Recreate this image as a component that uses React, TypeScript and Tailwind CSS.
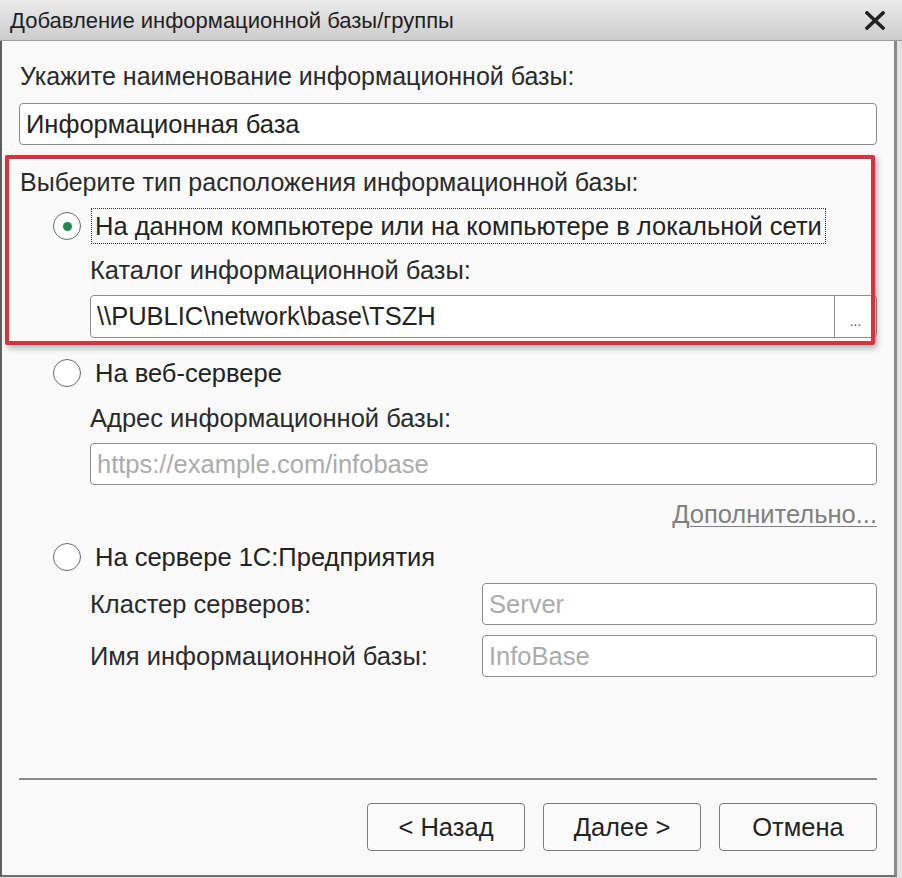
import React from "react";

const font = { fontFamily: '"Liberation Sans", Arial, sans-serif' };

function Radio({ checked, label, focused }: { checked?: boolean; label: string; focused?: boolean }) {
  return (
    <div className="flex items-center h-[38px] ml-[34px]">
      <span className="w-[28px] h-[28px] rounded-full border-[1.5px] border-[#6a6a6a] bg-white flex items-center justify-center shrink-0">
        {checked && <span className="w-[9px] h-[9px] rounded-full bg-[#1e8b4f]" />}
      </span>
      <span
        className={`ml-[10px] px-[3px] h-[36px] flex items-center text-[25.5px] text-[#222] whitespace-nowrap ${
          focused ? "border border-dotted border-[#333]" : "border border-transparent"
        }`}
      >
        {label}
      </span>
    </div>
  );
}

function Field({ value, placeholder, className = "" }: { value?: string; placeholder?: string; className?: string }) {
  return (
    <div
      className={`h-[42px] border border-[#8c8c8c] rounded-[4px] bg-white flex items-center px-[6px] text-[25.5px] ${className}`}
    >
      {value ? <span className="text-[#222]">{value}</span> : <span className="text-[#ababab]">{placeholder}</span>}
    </div>
  );
}

export default function App() {
  return (
    <div className="relative w-[902px] h-[878px] bg-[#e2e2e2] overflow-hidden" style={font}>
      {/* title bar */}
      <div className="h-[41px] bg-gradient-to-b from-[#ebebeb] to-[#cdcdcd] border-b border-[#9c9c9c] flex items-center justify-between pl-[10px] pr-[17px]">
        <span className="text-[22px] text-[#1f1f1f]">Добавление информационной базы/группы</span>
        <svg width="20" height="19" viewBox="0 0 20 19">
          <path d="M2 2 L18 17 M18 2 L2 17" stroke="#222" strokeWidth="3.6" strokeLinecap="square" />
        </svg>
      </div>

      <div className="w-[897px] h-[836px] bg-[#fafafa] border-l-2 border-r-[3px] border-b-2 border-l-[#5e5e5e] border-r-[#8a8a8a] border-b-[#6e6e6e] px-[17px] pt-[18px] flex flex-col text-[#2a2a2a]">
        <div className="h-[36px] flex items-center text-[25px] pl-[1px]">Укажите наименование информационной базы:</div>
        <Field value="Информационная база" className="mt-[8px]" />

        <div className="mt-[20px] h-[36px] flex items-center text-[25px] pl-[1px]">Выберите тип расположения информационной базы:</div>
        <div className="mt-[6px]">
          <Radio checked focused label="На данном компьютере или на компьютере в локальной сети" />
        </div>
        <div className="ml-[71px] mt-[7px] h-[36px] flex items-center text-[25.5px]">Каталог информационной базы:</div>
        <div className="ml-[71px] mt-[7px] h-[43px] border border-[#8c8c8c] rounded-[4px] bg-white flex">
          <div className="flex-1 flex items-center px-[6px] text-[25.5px] text-[#222]">\\PUBLIC\network\base\TSZH</div>
          <div className="w-[42px] border-l border-[#8c8c8c] flex items-end justify-center pb-[9px] text-[14px] leading-none text-[#555]">...</div>
        </div>

        <div className="mt-[16px]">
          <Radio label="На веб-сервере" />
        </div>
        <div className="ml-[71px] mt-[8px] h-[36px] flex items-center text-[25.5px]">Адрес информационной базы:</div>
        <Field placeholder="https://example.com/infobase" className="ml-[71px] mt-[7px]" />
        <div className="mt-[14px] h-[30px] flex items-center justify-end">
          <span className="text-[25.5px] text-[#808080] underline underline-offset-[3px] decoration-1">Дополнительно...</span>
        </div>

        <div className="mt-[9px]">
          <Radio label="На сервере 1С:Предприятия" />
        </div>
        <div className="mt-[7px] flex items-center">
          <span className="ml-[71px] w-[392px] text-[25.5px]">Кластер серверов:</span>
          <Field placeholder="Server" className="flex-1" />
        </div>
        <div className="mt-[10px] flex items-center">
          <span className="ml-[71px] w-[392px] text-[25.5px]">Имя информационной базы:</span>
          <Field placeholder="InfoBase" className="flex-1" />
        </div>

        <div className="mt-[101px] h-[2px] bg-[#8a8a8a]" />

        <div className="mt-[23px] flex justify-end gap-[18px]">
          {["< Назад", "Далее >", "Отмена"].map((t) => (
            <button
              key={t}
              className="w-[158px] h-[48px] border border-[#7c7c7c] rounded-[4px] bg-[#fbfbfb] text-[25.5px] text-[#222]"
            >
              {t}
            </button>
          ))}
        </div>
      </div>

      {/* red highlight drawn over the screenshot */}
      <div className="absolute left-[5px] top-[155px] w-[870px] h-[190px] border-4 border-[#d9323d] rounded-[2px] shadow-[2px_3px_6px_rgba(0,0,0,0.3)] pointer-events-none" />
    </div>
  );
}
